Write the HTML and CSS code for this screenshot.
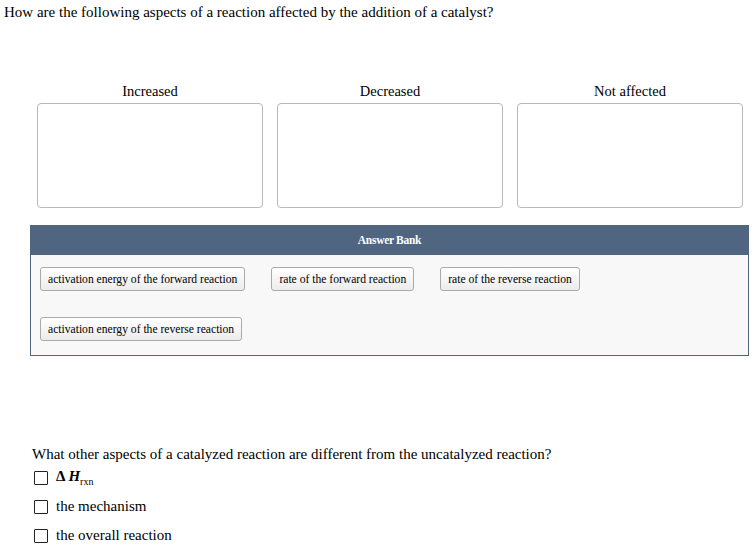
FILE: index.html
```html
<!doctype html>
<html lang="en">
<head>
  <meta charset="utf-8">
  <title>Catalyst question</title>
  <link rel="stylesheet" href="styles.css">
</head>
<body>
  <p class="prompt">How are the following aspects of a reaction affected by the addition of a catalyst?</p>

  <div class="bins">
    <div class="bin">
      <div class="bin-label">Increased</div>
      <div class="bin-box"></div>
    </div>
    <div class="bin">
      <div class="bin-label">Decreased</div>
      <div class="bin-box"></div>
    </div>
    <div class="bin">
      <div class="bin-label">Not affected</div>
      <div class="bin-box"></div>
    </div>
  </div>

  <div class="bank">
    <div class="bank-head">Answer Bank</div>
    <div class="bank-body">
      <span class="chip">activation energy of the forward reaction</span>
      <span class="chip">rate of the forward reaction</span>
      <span class="chip">rate of the reverse reaction</span>
      <span class="chip">activation energy of the reverse reaction</span>
    </div>
  </div>

  <div class="part2">
    <p class="question">What other aspects of a catalyzed reaction are different from the uncatalyzed reaction?</p>
    <label class="option"><span class="box"></span><span class="math">&Delta;<i>H</i><sub>rxn</sub></span></label>
    <label class="option"><span class="box"></span>the mechanism</label>
    <label class="option"><span class="box"></span>the overall reaction</label>
  </div>
</body>
</html>
```

FILE: styles.css
```css
body {
  margin: 0;
  padding: 0 4px;
  font-family: "Liberation Serif", "Times New Roman", serif;
  color: #000;
  background: #fff;
}
.prompt {
  margin: 4px 0 0;
  font-size: 15px;
  line-height: 16px;
}
.bins {
  display: grid;
  grid-template-columns: repeat(3, 240px);
  margin: 62px 0 0 26px;
}
.bin {
  padding: 0 7px;
}
.bin-label {
  text-align: center;
  font-size: 14.5px;
  line-height: 18px;
  margin-bottom: 3px;
}
.bin-box {
  height: 103px;
  border: 1px solid #b8b8b8;
  border-radius: 4px;
}
.bank {
  margin: 17px 0 0 26px;
  width: 717px;
  border: 1px solid #506580;
}
.bank-head {
  height: 29px;
  line-height: 29px;
  background: #506580;
  color: #fff;
  text-align: center;
  font-size: 11.5px;
  font-weight: bold;
  letter-spacing: -0.3px;
}
.bank-body {
  background: #f8f8f8;
  height: 100px;
  padding: 12px 0 0 9px;
  box-sizing: border-box;
  display: flex;
  flex-wrap: wrap;
  align-content: flex-start;
  column-gap: 26px;
  row-gap: 26px;
}
.chip {
  height: 22px;
  line-height: 23px;
  padding: 0 7px;
  font-size: 11.6px;
  border: 1px solid #aaa;
  border-radius: 3px;
  background: linear-gradient(#fff, #ececec);
  white-space: nowrap;
}
.chip:nth-child(3) {
  margin-right: 150px;
}
.part2 {
  margin: 90px 0 0 28px;
}
.question {
  margin: 0;
  font-size: 15px;
  line-height: 17px;
}
.option {
  display: flex;
  align-items: center;
  height: 29px;
  font-size: 15px;
}
.box {
  width: 12px;
  height: 12px;
  border: 1px solid #222;
  border-radius: 1px;
  margin: 0 8px 0 2px;
  background: #fff;
}
.math {
  font-weight: bold;
  font-size: 15px;
}
.math i {
  margin-left: 3px;
}
.math sub {
  font-size: 10px;
  font-weight: normal;
}
```
